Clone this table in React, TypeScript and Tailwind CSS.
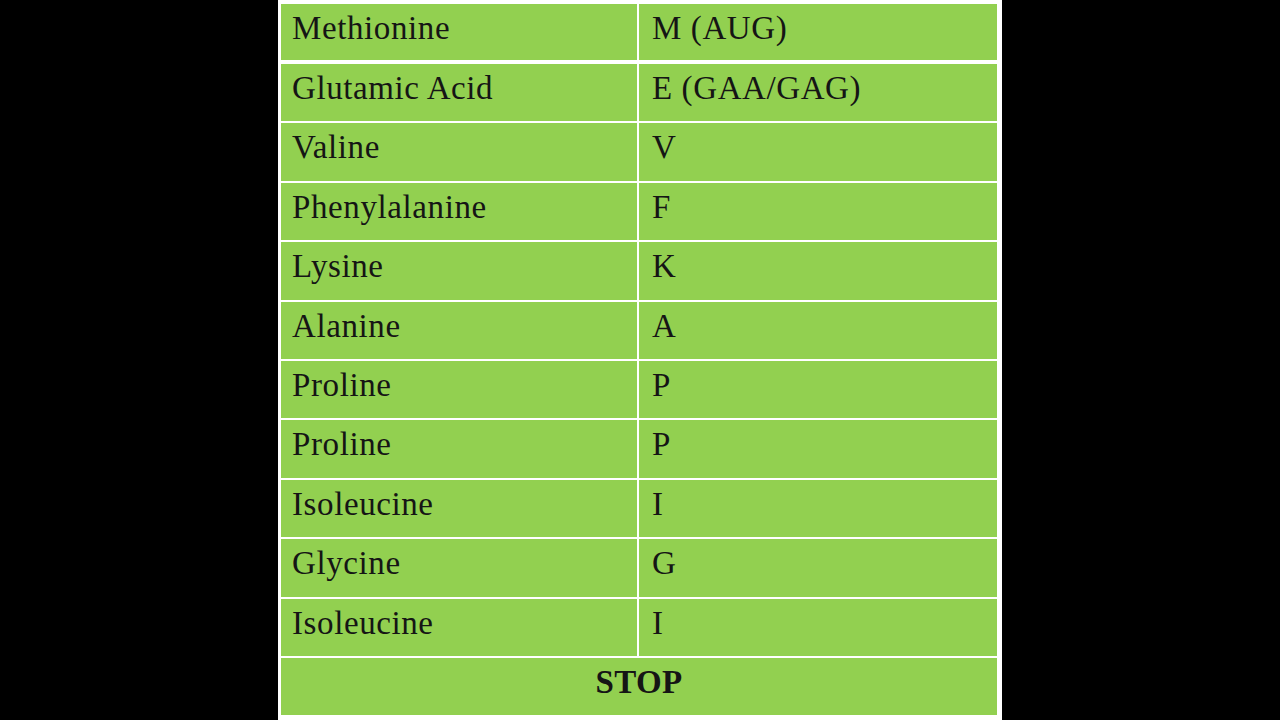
const rows: [string, string][] = [
  ['Glutamic Acid', 'E (GAA/GAG)'],
  ['Valine', 'V'],
  ['Phenylalanine', 'F'],
  ['Lysine', 'K'],
  ['Alanine', 'A'],
  ['Proline', 'P'],
  ['Proline', 'P'],
  ['Isoleucine', 'I'],
  ['Glycine', 'G'],
  ['Isoleucine', 'I'],
];

const font = { fontFamily: '"Liberation Serif", "Times New Roman", serif' };

function Row({ name, code, first }: { name: string; code: string; first?: boolean }) {
  return (
    <div className={`grid grid-cols-[356px_358px] gap-x-[2px] ${first ? 'h-[56px]' : 'h-[57.4px]'}`}>
      <div className="bg-[#92d050] pl-[11px] pt-[6px] leading-[36px]">{name}</div>
      <div className="bg-[#92d050] pl-[13px] pt-[6px] leading-[36px]">{code}</div>
    </div>
  );
}

export default function App() {
  return (
    <div className="w-[1280px] h-[720px] bg-black overflow-hidden">
      <div
        className="ml-[278px] w-[724px] h-[725px] bg-white pt-[4px] pl-[3px] pr-[5px] text-[33px] tracking-[0.6px] text-[#151515]"
        style={font}
      >
        <Row name="Methionine" code="M (AUG)" first />
        <div className="mt-[4px] flex flex-col gap-y-[2px]">
          {rows.map(([name, code], i) => (
            <Row key={i} name={name} code={code} />
          ))}
          <div className="h-[57.4px] bg-[#92d050] pt-[6px] leading-[36px] text-center font-bold tracking-[0.3px]">
            STOP
          </div>
        </div>
      </div>
    </div>
  );
}
